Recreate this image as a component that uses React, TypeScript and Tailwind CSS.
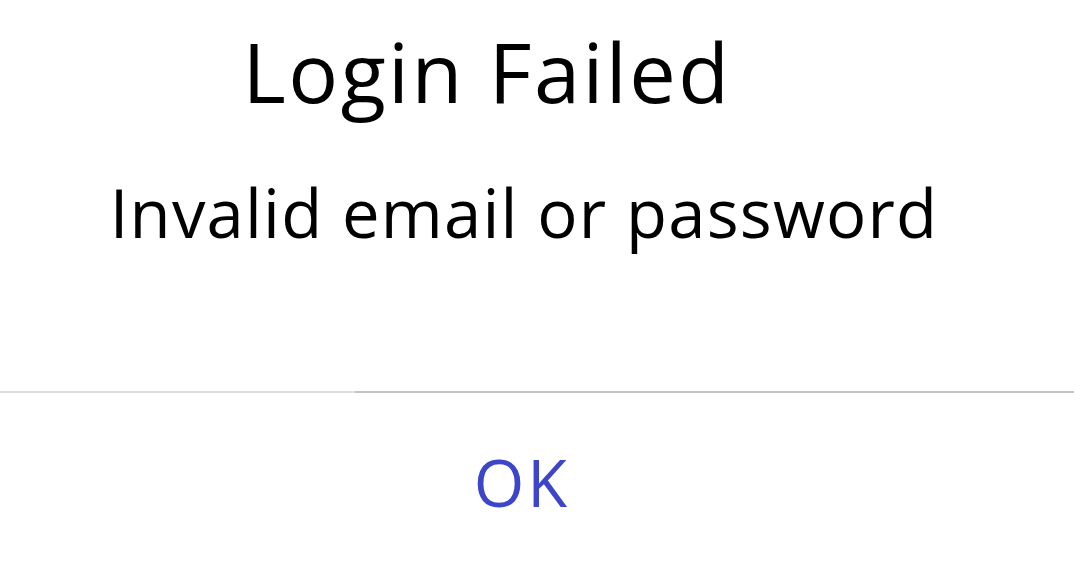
export default function App() {
  return (
    <div className="w-[1074px] h-[562px] bg-white overflow-hidden flex flex-col" style={{ fontFamily: "'Open Sans', Lato, sans-serif" }}>
      <div className="mt-[29px] text-[83px] leading-none tracking-[2.4px] text-black text-center pr-[100px]">Login Failed</div>
      <div className="mt-[67px] text-[67px] leading-none tracking-[1.2px] text-black text-center pr-[26px]">Invalid email or password</div>
      <div className="mt-[145px] flex h-[2px]">
        <div className="w-[355px] bg-[#dcdcdc]" />
        <div className="flex-1 bg-[#c4c4c4]" />
      </div>
      <div className="mt-[57px] text-[65px] leading-none tracking-[3px] text-[#3d46c8] text-center pr-[30px]">OK</div>
    </div>
  );
}
